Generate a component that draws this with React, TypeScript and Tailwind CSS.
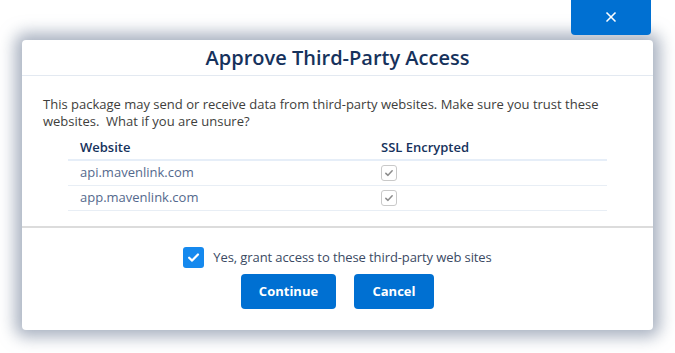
import { X } from 'lucide-react';

const sites = ['api.mavenlink.com', 'app.mavenlink.com'];

function SmallCheck() {
  return (
    <span className="flex h-[16px] w-[16px] items-center justify-center rounded-[3px] border border-[#c9c9c9] bg-white">
      <svg viewBox="0 0 12 12" className="h-[10px] w-[10px]">
        <path d="M2.2 6.4 L4.8 8.8 L9.8 3.4" fill="none" stroke="#8c8c8c" strokeWidth="1.8" strokeLinecap="round" strokeLinejoin="round" />
      </svg>
    </span>
  );
}

export default function App() {
  return (
    <div
      className="relative h-[353px] w-[675px] overflow-hidden bg-white pl-[22px] pt-[40px]"
      style={{ fontFamily: '"Open Sans", "Noto Sans", sans-serif' }}
    >
      <button
        type="button"
        className="absolute right-[24px] top-[-6px] flex h-[41px] w-[80px] items-center justify-center rounded-[4px] bg-[#0070d2] pt-[4px] text-white"
      >
        <X className="h-[16px] w-[16px]" strokeWidth={2.5} />
      </button>

      <div className="flex h-[290px] w-[631px] flex-col rounded-[4px] bg-white shadow-[0_0_16px_7px_rgba(110,125,150,0.6)]">
        <div className="flex h-[36px] shrink-0 items-center justify-center border-b border-[#e3e9f1]">
          <h1 className="text-[20px] font-semibold text-[#16325c]">Approve Third-Party Access</h1>
        </div>

        <div className="flex flex-1 flex-col px-[21px] pt-[20px]">
          <p className="text-[13px] leading-[17px] text-[#3e3e3c]">
            This package may send or receive data from third-party websites. Make sure you trust these
            websites.&nbsp; What if you are unsure?
          </p>

          <table className="ml-[25px] mt-[7px] w-[539px] text-left text-[13px]">
            <thead>
              <tr className="border-b-2 border-[#e6eef8]">
                <th className="h-[23px] pl-[12px] font-semibold text-[#16325c]">Website</th>
                <th className="h-[23px] w-[226px] font-semibold text-[#16325c]">SSL Encrypted</th>
              </tr>
            </thead>
            <tbody>
              {sites.map((site) => (
                <tr key={site} className="border-b border-[#e8eef5]">
                  <td className="h-[25px] pl-[12px] text-[#54698d]">{site}</td>
                  <td className="h-[25px]">
                    <SmallCheck />
                  </td>
                </tr>
              ))}
            </tbody>
          </table>
        </div>

        <div className="flex shrink-0 flex-col items-center border-t-2 border-[#dcdcdc] pb-[21px] pt-[19px]">
          <label className="flex items-center gap-[9px]">
            <span className="flex h-[21px] w-[21px] items-center justify-center rounded-[3px] bg-[#1589ee]">
              <svg viewBox="0 0 14 14" className="h-[13px] w-[13px]">
                <path d="M2.3 7.3 L5.5 10.3 L11.8 3.8" fill="none" stroke="white" strokeWidth="2.4" strokeLinecap="round" strokeLinejoin="round" />
              </svg>
            </span>
            <span className="text-[13px] tracking-[-0.1px] text-[#3b4a63]">Yes, grant access to these third-party web sites</span>
          </label>
          <div className="mt-[6px] flex gap-[18px]">
            <button
              type="button"
              className="h-[35px] w-[95px] rounded-[4px] bg-[#0070d2] text-[13px] font-bold text-white"
            >
              Continue
            </button>
            <button
              type="button"
              className="h-[35px] w-[80px] rounded-[4px] bg-[#0070d2] text-[13px] font-bold text-white"
            >
              Cancel
            </button>
          </div>
        </div>
      </div>
    </div>
  );
}
